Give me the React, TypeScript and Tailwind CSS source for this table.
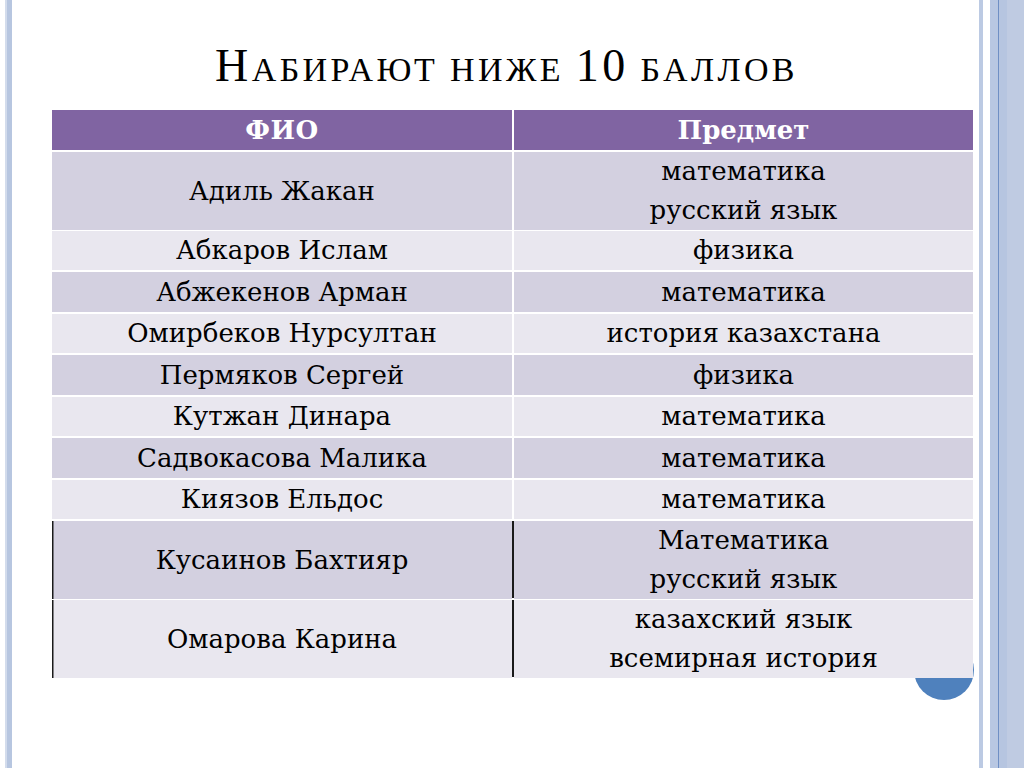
import React from "react";

type Row = { name: string; subjects: string[]; dark: boolean; h: string; ruled?: boolean };

const rows: Row[] = [
  { name: "Адиль Жакан", subjects: ["математика", "русский язык"], dark: true, h: "h-[77px]" },
  { name: "Абкаров Ислам", subjects: ["физика"], dark: false, h: "h-[39px]" },
  { name: "Абжекенов Арман", subjects: ["математика"], dark: true, h: "h-[40px]" },
  { name: "Омирбеков Нурсултан", subjects: ["история казахстана"], dark: false, h: "h-[39px]" },
  { name: "Пермяков Сергей", subjects: ["физика"], dark: true, h: "h-[40px]" },
  { name: "Кутжан Динара", subjects: ["математика"], dark: false, h: "h-[39px]" },
  { name: "Садвокасова Малика", subjects: ["математика"], dark: true, h: "h-[40px]" },
  { name: "Киязов Ельдос", subjects: ["математика"], dark: false, h: "h-[39px]" },
  { name: "Кусаинов Бахтияр", subjects: ["Математика", "русский язык"], dark: true, h: "h-[77px]", ruled: true },
  { name: "Омарова Карина", subjects: ["казахский язык", "всемирная история"], dark: false, h: "h-[77px]", ruled: true },
];

const serif = { fontFamily: '"DejaVu Serif", "Liberation Serif", serif' };

const App = () => {
  return (
    <div className="w-[1024px] h-[768px] bg-white flex overflow-hidden">
      {/* left edge stripes */}
      <div className="w-[5px] bg-white" />
      <div className="w-[2px] bg-[#d3dcec]" />
      <div className="w-[5px] bg-[#b7c6e0]" />

      {/* slide body */}
      <div className="flex-1 relative pl-[40px] pr-[6px]">
        {/* blue circle peeking under the table */}
        <div className="absolute left-[902px] top-[640px] w-[60px] h-[60px] rounded-full bg-[#4f81bd]" />

        <div
          className="w-[909px] h-[52px] text-center text-[46px] leading-[52px] text-black mt-[40px] tracking-[3.4px] whitespace-nowrap"
          style={{ fontFamily: '"Liberation Serif", serif' }}
        >
          Н<span className="text-[34px]">АБИРАЮТ НИЖЕ </span>10<span className="text-[34px]"> БАЛЛОВ</span>
        </div>

        <div className="relative z-10 mt-[18px] w-[921px] flex flex-col gap-[2px]" style={serif}>
          {/* header */}
          <div className="h-[40px] grid grid-cols-[460px_459px] gap-[2px] bg-white">
            <div className="bg-[#8064a2] flex items-center justify-center text-white font-bold text-[26px] tracking-[0.5px]">
              ФИО
            </div>
            <div className="bg-[#8064a2] flex items-center justify-center text-white font-bold text-[26px]">
              Предмет
            </div>
          </div>

          {rows.map((r, i) => (
            <div
              key={i}
              className={`${r.h} grid grid-cols-[460px_459px] gap-[2px] ${r.ruled ? "bg-[#1a1a1a]" : "bg-white"}`}
            >
              <div
                className={`${r.dark ? "bg-[#d3d0e0]" : "bg-[#e9e7ef]"} ${r.ruled ? "shadow-[inset_1.5px_0_0_#1a1a1a]" : ""} flex items-center justify-center text-[26px] text-black`}
              >
                {r.name}
              </div>
              <div
                className={`${r.dark ? "bg-[#d3d0e0]" : "bg-[#e9e7ef]"} flex flex-col items-center justify-center text-[26px] leading-[39px] text-black`}
              >
                {r.subjects.map((s) => (
                  <span key={s}>{s}</span>
                ))}
              </div>
            </div>
          ))}
        </div>
      </div>

      {/* right edge stripes */}
      <div className="w-[4px] bg-[#bccae3]" />
      <div className="w-[7px] bg-white" />
      <div className="w-[8px] bg-[#b8c7e2]" />
      <div className="w-[1px] bg-[#6f8fc4]" />
      <div className="w-[8px] bg-[#b6c5e0]" />
      <div className="w-[17px] bg-[#bfcbe2]" />
    </div>
  );
};

export default App;
